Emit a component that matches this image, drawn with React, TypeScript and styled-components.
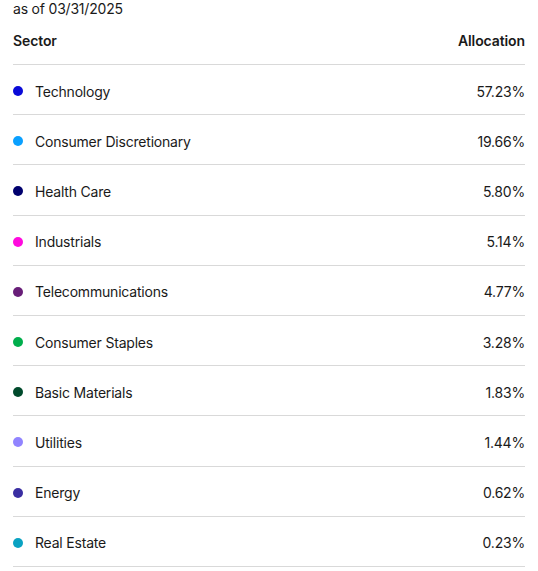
import styled, { createGlobalStyle } from 'styled-components';

const sectors = [
  { name: 'Technology', value: '57.23%', color: '#0a0ad8' },
  { name: 'Consumer Discretionary', value: '19.66%', color: '#0aa0ff' },
  { name: 'Health Care', value: '5.80%', color: '#00006e' },
  { name: 'Industrials', value: '5.14%', color: '#ff0ade' },
  { name: 'Telecommunications', value: '4.77%', color: '#681e78' },
  { name: 'Consumer Staples', value: '3.28%', color: '#00ae4c' },
  { name: 'Basic Materials', value: '1.83%', color: '#004a2c' },
  { name: 'Utilities', value: '1.44%', color: '#9184ff' },
  { name: 'Energy', value: '0.62%', color: '#3a2ea2' },
  { name: 'Real Estate', value: '0.23%', color: '#0aa2c2' },
];

const GlobalStyle = createGlobalStyle`
  body {
    margin: 0;
    background: #ffffff;
    font-family: Inter, "Liberation Sans", Arial, sans-serif;
    color: #1a1a1a;
  }
`;

const S = {
  Wrapper: styled.div`
    padding: 0 13px;
    width: 512px;
  `,
  AsOf: styled.div`
    font-size: 14px;
    line-height: 18px;
    letter-spacing: -0.2px;
  `,
  Table: styled.div`
    display: flex;
    flex-direction: column;
  `,
  HeaderRow: styled.div`
    display: flex;
    justify-content: space-between;
    align-items: center;
    height: 47px;
    padding-bottom: 2px;
    box-sizing: border-box;
    border-bottom: 1px solid #d9d9d9;
    font-size: 14px;
    font-weight: 600;
    letter-spacing: -0.1px;
  `,
  Row: styled.div`
    display: flex;
    align-items: center;
    height: 50.2px;
    padding-top: 3px;
    box-sizing: border-box;
    border-bottom: 1px solid #d9d9d9;
    font-size: 14px;
    letter-spacing: -0.2px;
  `,
  Dot: styled.span<{ $color: string }>`
    width: 10px;
    height: 10px;
    border-radius: 50%;
    background: ${({ $color }) => $color};
    margin-right: 12px;
    flex-shrink: 0;
  `,
  Name: styled.span`
    flex: 1;
  `,
  Value: styled.span`
    text-align: right;
  `,
};

function App() {
  return (
    <>
      <GlobalStyle />
      <S.Wrapper>
        <S.AsOf>as of 03/31/2025</S.AsOf>
        <S.Table>
          <S.HeaderRow>
            <span>Sector</span>
            <span>Allocation</span>
          </S.HeaderRow>
          {sectors.map((s) => (
            <S.Row key={s.name}>
              <S.Dot $color={s.color} />
              <S.Name>{s.name}</S.Name>
              <S.Value>{s.value}</S.Value>
            </S.Row>
          ))}
        </S.Table>
      </S.Wrapper>
    </>
  );
}

export default App;
